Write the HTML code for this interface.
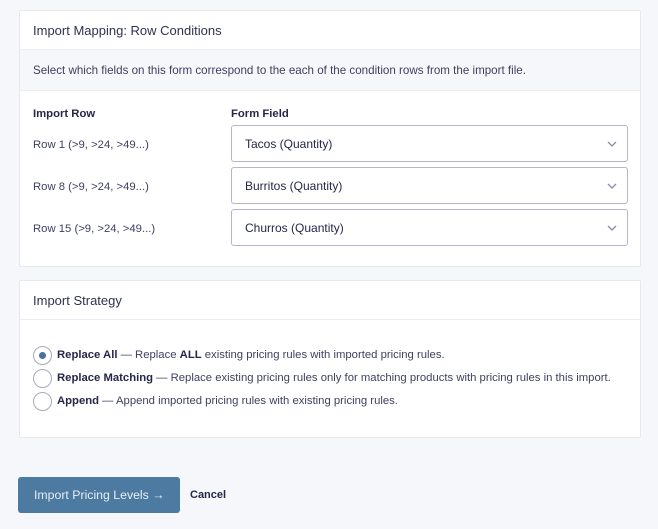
<!DOCTYPE html>
<html><head><style>
*{box-sizing:border-box;margin:0;padding:0}
body{width:658px;height:529px;background:#f6f7fb;font-family:"Liberation Sans",sans-serif;color:#242748;position:relative;overflow:hidden}
.panel{position:absolute;left:19px;width:622px;background:#fff;border:1px solid #e6e8ee;border-radius:2px}
.hd{height:39px;border-bottom:1px solid #ebedf1;padding:12px 0 0 13px;font-size:13px;color:#2f3250}
.desc{height:41px;background:#f6f7fb;border-bottom:1px solid #ebedf1;padding:14px 0 0 13px;font-size:11.6px;color:#3e4160}
.lbl{position:absolute;font-size:11.3px;font-weight:bold;color:#242748}
.row{position:absolute;left:13px;font-size:11.3px;color:#3e4160}
.sel{position:absolute;left:211px;width:397px;height:37px;border:1px solid #b8b4d0;border-radius:3px;font-size:12px;color:#242748;padding:11px 0 0 13px}
.sel svg{position:absolute;right:10px;top:15px}
.opt{position:absolute;left:13px;font-size:11.3px;color:#3e4160;height:19px}
.opt .r{position:absolute;left:0;top:0;width:19px;height:19px;border:1px solid #a7a9bd;border-radius:50%;background:#fff}
.opt .r.on::after{content:"";position:absolute;left:5px;top:5px;width:7px;height:7px;border-radius:50%;background:#4a6fa0}
.opt span.t{position:absolute;left:24px;top:3px;white-space:nowrap}
b{color:#242748}
</style></head><body>
<div class="panel" style="top:10px;height:257px">
<div class="hd">Import Mapping: Row Conditions</div>
<div class="desc">Select which fields on this form correspond to the each of the condition rows from the import file.</div>
<div class="lbl" style="left:13px;top:97px">Import Row</div>
<div class="lbl" style="left:211px;top:97px">Form Field</div>
<div class="row" style="top:128px">Row 1 (&gt;9, &gt;24, &gt;49...)</div>
<div class="row" style="top:170px">Row 8 (&gt;9, &gt;24, &gt;49...)</div>
<div class="row" style="top:212px">Row 15 (&gt;9, &gt;24, &gt;49...)</div>
<div class="sel" style="top:114px">Tacos (Quantity)<svg width="10" height="6" viewBox="0 0 10 6"><path d="M1 1l4 4 4-4" stroke="#8a8ca8" stroke-width="1.3" fill="none"/></svg></div>
<div class="sel" style="top:156px">Burritos (Quantity)<svg width="10" height="6" viewBox="0 0 10 6"><path d="M1 1l4 4 4-4" stroke="#8a8ca8" stroke-width="1.3" fill="none"/></svg></div>
<div class="sel" style="top:198px">Churros (Quantity)<svg width="10" height="6" viewBox="0 0 10 6"><path d="M1 1l4 4 4-4" stroke="#8a8ca8" stroke-width="1.3" fill="none"/></svg></div>
</div>
<div class="panel" style="top:280px;height:158px">
<div class="hd">Import Strategy</div>
<div class="opt" style="top:65px"><div class="r on"></div><span class="t"><b>Replace All</b> — Replace <b>ALL</b> existing pricing rules with imported pricing rules.</span></div>
<div class="opt" style="top:88px"><div class="r"></div><span class="t"><b>Replace Matching</b> — Replace existing pricing rules only for matching products with pricing rules in this import.</span></div>
<div class="opt" style="top:111px"><div class="r"></div><span class="t"><b>Append</b> — Append imported pricing rules with existing pricing rules.</span></div>
</div>
<div style="position:absolute;left:18px;top:477px;width:162px;height:36px;background:#4c7aa0;border-radius:3px;color:#e8eef5;font-size:12.3px;padding:11px 0 0 16px">Import Pricing Levels →</div>
<div style="position:absolute;left:190px;top:489px;font-size:11px;font-weight:bold;color:#242748">Cancel</div>
</body></html>
